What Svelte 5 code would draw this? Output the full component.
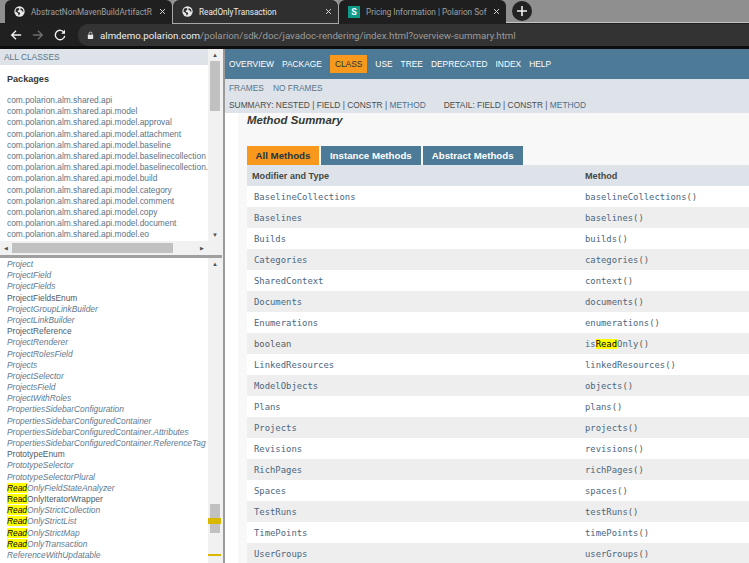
<script>
  const tabs = [
    { title: 'AbstractNonMavenBuildArtifactR', kind: 'globe' },
    { title: 'ReadOnlyTransaction', kind: 'globe', active: true },
    { title: 'Pricing Information | Polarion Sof', kind: 'site' }
  ];

  const packages = [
    'com.polarion.alm.shared.api',
    'com.polarion.alm.shared.api.model',
    'com.polarion.alm.shared.api.model.approval',
    'com.polarion.alm.shared.api.model.attachment',
    'com.polarion.alm.shared.api.model.baseline',
    'com.polarion.alm.shared.api.model.baselinecollection',
    'com.polarion.alm.shared.api.model.baselinecollection.',
    'com.polarion.alm.shared.api.model.build',
    'com.polarion.alm.shared.api.model.category',
    'com.polarion.alm.shared.api.model.comment',
    'com.polarion.alm.shared.api.model.copy',
    'com.polarion.alm.shared.api.model.document',
    'com.polarion.alm.shared.api.model.eo'
  ];

  const classes = [
    { name: 'Project', i: true },
    { name: 'ProjectField', i: true },
    { name: 'ProjectFields', i: true },
    { name: 'ProjectFieldsEnum' },
    { name: 'ProjectGroupLinkBuilder', i: true },
    { name: 'ProjectLinkBuilder', i: true },
    { name: 'ProjectReference' },
    { name: 'ProjectRenderer', i: true },
    { name: 'ProjectRolesField', i: true },
    { name: 'Projects', i: true },
    { name: 'ProjectSelector', i: true },
    { name: 'ProjectsField', i: true },
    { name: 'ProjectWithRoles', i: true },
    { name: 'PropertiesSidebarConfiguration', i: true },
    { name: 'PropertiesSidebarConfiguredContainer', i: true },
    { name: 'PropertiesSidebarConfiguredContainer.Attributes', i: true },
    { name: 'PropertiesSidebarConfiguredContainer.ReferenceTag', i: true },
    { name: 'PrototypeEnum' },
    { name: 'PrototypeSelector', i: true },
    { name: 'PrototypeSelectorPlural', i: true },
    { name: 'OnlyFieldStateAnalyzer', i: true, hit: true },
    { name: 'OnlyIteratorWrapper', hit: true },
    { name: 'OnlyStrictCollection', i: true, hit: true },
    { name: 'OnlyStrictList', i: true, hit: true },
    { name: 'OnlyStrictMap', i: true, hit: true },
    { name: 'OnlyTransaction', i: true, hit: true },
    { name: 'ReferenceWithUpdatable', i: true }
  ];

  const navItems = ['OVERVIEW', 'PACKAGE', 'CLASS', 'USE', 'TREE', 'DEPRECATED', 'INDEX', 'HELP'];

  const rows = [
    ['BaselineCollections', 'baselineCollections'],
    ['Baselines', 'baselines'],
    ['Builds', 'builds'],
    ['Categories', 'categories'],
    ['SharedContext', 'context'],
    ['Documents', 'documents'],
    ['Enumerations', 'enumerations'],
    ['boolean', 'isReadOnly'],
    ['LinkedResources', 'linkedResources'],
    ['ModelObjects', 'objects'],
    ['Plans', 'plans'],
    ['Projects', 'projects'],
    ['Revisions', 'revisions'],
    ['RichPages', 'richPages'],
    ['Spaces', 'spaces'],
    ['TestRuns', 'testRuns'],
    ['TimePoints', 'timePoints'],
    ['UserGroups', 'userGroups']
  ];
</script>

<div class="window">
  <div class="tabstrip">
    <div class="tab-edge"></div>
    {#each tabs as tab}
      <div class="tab" class:active={tab.active}>
        {#if tab.kind === 'globe'}
          <svg class="favicon" viewBox="0 0 16 16">
            <circle cx="8" cy="8" r="7.5" fill="#e8e8e8" />
            <path d="M3 4l3-1 2 1-1 2-2 1 1 2 2 0 1 2-2 3-1-3-2-2-2-1z M10 3l3 2 1 3-2 0-1-2-2-1z" fill="#2a2a2a" />
          </svg>
        {:else}
          <span class="site-icon">S</span>
        {/if}
        <span class="tab-title">{tab.title}</span>
        <svg class="tab-close" viewBox="0 0 10 10">
          <path d="M1.5 1.5l7 7M8.5 1.5l-7 7" stroke="#d8d8d8" stroke-width="1.4" />
        </svg>
      </div>
    {/each}
    <div class="strip-fill">
      <div class="new-tab">
        <svg viewBox="0 0 12 12" width="12" height="12">
          <path d="M6 1v10M1 6h10" stroke="#f0f0f0" stroke-width="1.6" />
        </svg>
      </div>
    </div>
  </div>

  <div class="toolbar">
    <svg class="tool" viewBox="0 0 14 14">
      <path d="M13 7H2M7 2L2 7l5 5" fill="none" stroke="#f2f2f2" stroke-width="1.6" />
    </svg>
    <svg class="tool" viewBox="0 0 14 14">
      <path d="M1 7h11M7 2l5 5-5 5" fill="none" stroke="#6e6e6e" stroke-width="1.6" />
    </svg>
    <svg class="tool" viewBox="0 0 14 14">
      <path d="M11.8 4.2A5.5 5.5 0 1 0 12.5 8" fill="none" stroke="#f2f2f2" stroke-width="1.6" />
      <path d="M12.8 1v4.4H8.4z" fill="#f2f2f2" />
    </svg>
    <div class="omnibox">
      <svg class="lock" viewBox="0 0 10 12">
        <path d="M2.8 5V3.4a2.2 2.2 0 0 1 4.4 0V5" fill="none" stroke="#e8e8e8" stroke-width="1.1" />
        <rect x="1.2" y="5" width="7.6" height="6" rx="0.8" fill="#e8e8e8" />
      </svg>
      <span class="host">almdemo.polarion.com</span><span class="path">/polarion/sdk/doc/javadoc-rendering/index.html?overview-summary.html</span>
    </div>
  </div>

  <div class="page">
    <aside class="sidebar">
      <section class="frame packages">
        <div class="frame-body">
          <div class="frame-main">
            <div class="all-classes">ALL CLASSES</div>
            <h4>Packages</h4>
            <ul>
              {#each packages as pkg}
                <li>{pkg}</li>
              {/each}
            </ul>
          </div>
          <div class="vscroll">
            <span class="arrow">▲</span>
            <div class="track"><div class="thumb top-thumb"></div></div>
            <span class="arrow">▼</span>
          </div>
        </div>
        <div class="hscroll">
          <span class="arrow">◀</span>
          <div class="hthumb"></div>
          <span class="arrow">▶</span>
        </div>
      </section>

      <section class="frame classes">
        <div class="frame-body">
          <div class="frame-main">
            <ul class="class-list">
              {#each classes as c}
                <li class:italic={c.i}>
                  {#if c.hit}<mark>Read</mark>{/if}{c.name}
                </li>
              {/each}
            </ul>
          </div>
          <div class="vscroll">
            <span class="arrow">▲</span>
            <div class="track low">
              <div class="thumb low-thumb"></div>
              <div class="hit-mark one"></div>
              <div class="hit-mark two"></div>
            </div>
          </div>
        </div>
      </section>
    </aside>

    <main class="content">
      <nav class="topnav">
        {#each navItems as item}
          <span class="nav-item" class:current={item === 'CLASS'}>{item}</span>
        {/each}
      </nav>
      <div class="subnav">
        <div class="frames"><span>FRAMES</span><span>NO FRAMES</span></div>
        <div class="summary">
          <span>SUMMARY: NESTED | FIELD | CONSTR | <span class="link">METHOD</span></span>
          <span>DETAIL: FIELD | CONSTR | <span class="link">METHOD</span></span>
        </div>
      </div>
      <div class="doc">
        <div class="panel">
          <h3>Method Summary</h3>
          <div class="method-tabs">
            <span class="method-tab selected">All Methods</span>
            <span class="method-tab">Instance Methods</span>
            <span class="method-tab">Abstract Methods</span>
          </div>
          <div class="row head">
            <span>Modifier and Type</span>
            <span>Method</span>
          </div>
          {#each rows as [type, method], i}
            <div class="row" class:alt={i % 2 === 1}>
              <span class="code" class:plain={type === 'boolean'}>{type}</span>
              <span class="code">
                {#if method === 'isReadOnly'}is<mark>Read</mark>Only{:else}{method}{/if}<span class="parens">()</span>
              </span>
            </div>
          {/each}
        </div>
      </div>
    </main>
  </div>
</div>

<style>
  :global(body) {
    margin: 0;
    overflow: hidden;
  }

  .window {
    width: 749px;
    height: 563px;
    display: flex;
    flex-direction: column;
    overflow: hidden;
    font-family: "Liberation Sans", Arial, sans-serif;
    background: #fff;
  }

  /* browser chrome */
  .tabstrip {
    height: 23px;
    flex-shrink: 0;
    display: flex;
    align-items: stretch;
    background: #8f8f8f;
  }

  .tab-edge {
    width: 5px;
  }

  .strip-fill {
    flex: 1;
    border-bottom: 1px solid #c4c4c4;
  }

  .tab {
    width: 167px;
    box-sizing: border-box;
    padding: 0 6px 0 9px;
    display: flex;
    align-items: center;
    color: #a0a0a0;
    background: #1f1f1f;
    font-family: Roboto, sans-serif;
    font-size: 8.2px;
    border-radius: 6px 6px 0 0;
  }

  .tab.active {
    color: #ececec;
    background: #2f2f2f;
    box-shadow: 0 0 0 1px #a8a8a8;
    width: 165px;
    margin: 0 1px;
    z-index: 1;
  }

  .favicon {
    width: 11px;
    height: 11px;
    flex-shrink: 0;
    margin-right: 6px;
  }

  .site-icon {
    width: 12px;
    height: 12px;
    flex-shrink: 0;
    margin-right: 6px;
    background: #109a8a;
    color: #fff;
    font-size: 9px;
    font-weight: 700;
    line-height: 12px;
    text-align: center;
  }

  .tab-title {
    flex: 1;
    overflow: hidden;
    white-space: nowrap;
  }

  .tab-close {
    width: 7px;
    height: 7px;
    flex-shrink: 0;
    margin-left: 4px;
  }

  .new-tab {
    width: 20px;
    height: 20px;
    margin: 1px 0 0 6px;
    border-radius: 50%;
    background: #232323;
    display: flex;
    align-items: center;
    justify-content: center;
  }

  .toolbar {
    height: 26px;
    box-sizing: border-box;
    flex-shrink: 0;
    padding: 1px 0 0 10px;
    display: flex;
    align-items: center;
    gap: 10px;
    background: #202020;
    border-bottom: 3px solid #0e0e0e;
  }

  .tool {
    width: 12px;
    height: 12px;
    flex-shrink: 0;
  }

  .omnibox {
    flex: 1;
    height: 100%;
    margin-left: 2px;
    padding-left: 9px;
    display: flex;
    align-items: center;
    background: #333;
    border-radius: 10px 0 0 10px;
    font-family: Roboto, sans-serif;
    font-size: 9.7px;
    white-space: nowrap;
    overflow: hidden;
  }

  .lock {
    width: 7px;
    height: 9px;
    flex-shrink: 0;
    margin-right: 6px;
  }

  .host {
    color: #eee;
  }

  .path {
    color: #9c9c9c;
  }

  /* page */
  .page {
    flex: 1;
    min-height: 0;
    display: flex;
    background: #f0f0f0;
  }

  .sidebar {
    width: 222px;
    flex-shrink: 0;
    display: flex;
    flex-direction: column;
  }

  .frame {
    display: flex;
    flex-direction: column;
    overflow: hidden;
    background: #fff;
  }

  .packages {
    height: 206px;
    flex-shrink: 0;
  }

  .classes {
    flex: 1;
    min-height: 0;
    border-top: 3px solid #a0a0a0;
  }

  .frame-body {
    flex: 1;
    min-height: 0;
    display: flex;
  }

  .frame-main {
    width: 208px;
    flex-shrink: 0;
    overflow: hidden;
  }

  .all-classes {
    height: 16px;
    padding-left: 4px;
    background: #dee3e9;
    color: #5a7488;
    font-size: 8.4px;
    line-height: 16px;
    white-space: nowrap;
  }

  h4 {
    margin: 0;
    padding: 8px 0 0 7px;
    height: 27px;
    box-sizing: border-box;
    color: #353833;
    font-size: 9.1px;
    font-weight: 700;
    line-height: 13px;
  }

  ul {
    margin: 0;
    padding: 3px 0 0 7px;
    list-style: none;
  }

  li {
    height: 11.2px;
    color: #5a7488;
    font-size: 8.4px;
    line-height: 11.2px;
    white-space: nowrap;
  }

  .class-list {
    padding-top: 1px;
  }

  .class-list li {
    color: #4c5c6c;
  }

  .class-list li.italic {
    color: #5f7a90;
    font-style: italic;
  }

  mark {
    background: #ffff00;
    color: #000;
  }

  .vscroll {
    width: 14px;
    flex-shrink: 0;
    display: flex;
    flex-direction: column;
    background: #f1f1f1;
  }

  .arrow {
    flex-shrink: 0;
    height: 12px;
    color: #505050;
    font-size: 6px;
    line-height: 12px;
    text-align: center;
  }

  .track {
    flex: 1;
    position: relative;
  }

  .thumb {
    position: absolute;
    left: 2px;
    width: 10px;
    background: #c1c1c1;
  }

  .top-thumb {
    top: 0;
    height: 50px;
  }

  .low-thumb {
    top: 234px;
    height: 29px;
  }

  .hit-mark {
    position: absolute;
    left: 0;
    width: 13px;
    background: #d9b800;
  }

  .hit-mark.one {
    top: 248px;
    height: 6px;
  }

  .hit-mark.two {
    top: 284px;
    height: 2px;
  }

  .hscroll {
    height: 14px;
    flex-shrink: 0;
    display: flex;
    align-items: center;
    background: #f1f1f1;
  }

  .hscroll .arrow {
    width: 12px;
    font-size: 5px;
  }

  .hthumb {
    width: 161px;
    height: 10px;
    margin-right: 23px;
    background: #c1c1c1;
  }

  .content {
    flex: 1;
    min-width: 0;
    margin-left: 1px;
    border-left: 2px solid #9a9a9a;
    display: flex;
    flex-direction: column;
    overflow: hidden;
    background: #fff;
  }

  .topnav {
    height: 30px;
    flex-shrink: 0;
    padding-left: 4px;
    display: flex;
    align-items: center;
    gap: 8px;
    background: #4d7a97;
    color: #fff;
    font-size: 8.4px;
    white-space: nowrap;
  }

  .nav-item {
    padding: 4px 0;
  }

  .nav-item.current {
    padding: 4px 5px;
    background: #f8981d;
    color: #253441;
  }

  .subnav {
    height: 34px;
    flex-shrink: 0;
    padding: 4px 0 0 4px;
    box-sizing: border-box;
    display: flex;
    flex-direction: column;
    gap: 7px;
    background: #dee3e9;
    color: #4a4d4a;
    font-size: 8.4px;
    line-height: 10px;
    white-space: nowrap;
  }

  .frames {
    display: flex;
    gap: 9px;
    color: #5a7488;
  }

  .summary {
    display: flex;
    gap: 18px;
  }

  .link {
    color: #4a6f8c;
  }

  .doc {
    flex: 1;
    min-height: 0;
    padding-left: 13px;
    overflow: hidden;
  }

  .panel {
    height: 100%;
    padding-left: 9px;
    background: #f8f8f8;
  }

  h3 {
    margin: 0;
    padding-top: 1px;
    height: 33px;
    box-sizing: border-box;
    color: #353833;
    font-size: 11.4px;
    font-style: italic;
    font-weight: 700;
    line-height: 13px;
  }

  .method-tabs {
    height: 19px;
    display: flex;
    gap: 2px;
  }

  .method-tab {
    padding: 0 9px;
    background: #4d7a97;
    color: #fff;
    font-size: 9.7px;
    font-weight: 700;
    line-height: 19px;
    white-space: nowrap;
  }

  .method-tab.selected {
    padding: 0 8.5px;
    background: #f8981d;
    color: #253441;
  }

  .row {
    height: 21px;
    box-sizing: border-box;
    padding-top: 1px;
    display: flex;
    align-items: center;
    background: #fff;
    white-space: nowrap;
  }

  .row > span:first-child {
    width: 338px;
    padding-left: 7px;
    box-sizing: border-box;
    flex-shrink: 0;
  }

  .row.alt {
    background: #eeeeee;
  }

  .row.head {
    background: #dee3e9;
    color: #454845;
    font-weight: 700;
    font-size: 9.1px;
  }

  .row.head > span:first-child {
    padding-left: 5px;
  }

  .code {
    color: #4a6782;
    font-family: "DejaVu Sans Mono", monospace;
    font-size: 8.9px;
  }

  .code.plain,
  .parens {
    color: #5c5c5c;
  }
</style>
